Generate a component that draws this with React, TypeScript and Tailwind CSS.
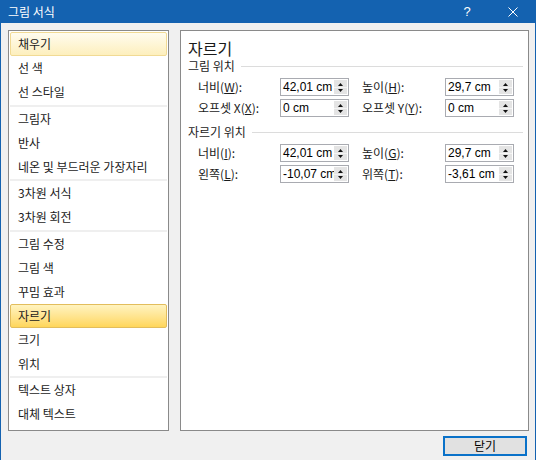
import type { ReactNode } from "react";

const groups = [
  ["채우기", "선 색", "선 스타일"],
  ["그림자", "반사", "네온 및 부드러운 가장자리"],
  ["3차원 서식", "3차원 회전"],
  ["그림 수정", "그림 색", "꾸밈 효과", "자르기", "크기", "위치"],
  ["텍스트 상자", "대체 텍스트"],
];

const hovered = "채우기";
const selected = "자르기";

const Key = ({ k }: { k: string }) => <span className="underline underline-offset-[1px]">{k}</span>;

const TitleBar = () => (
  <div className="h-[23px] bg-[#1462b0] flex items-center text-white">
    <span className="pl-[7px] flex-1 leading-none">그림 서식</span>
    <div className="w-[46px] h-full flex items-center justify-center text-[13px] font-['Liberation_Sans',sans-serif]">?</div>
    <div className="w-[45px] h-full flex items-center justify-center">
      <svg width="10" height="10" viewBox="0 0 10 10">
        <path d="M0.5 0.5 L9.5 9.5 M9.5 0.5 L0.5 9.5" stroke="#fff" strokeWidth="1" fill="none" />
      </svg>
    </div>
  </div>
);

const CategoryList = () => (
  <div className="w-[161px] h-[401px] border border-[#8a8a8a] bg-white pt-px px-px flex flex-col">
    {groups.map((items, gi) => (
      <div key={gi} className="flex flex-col">
        {gi > 0 && (
          <div className={`flex items-end ${gi % 2 === 1 ? "h-[3px]" : "h-[2px]"}`}>
            <div className="h-[2px] w-full bg-[#efefef]" />
          </div>
        )}
        {items.map((item) => {
          let look = "border-transparent";
          if (item === selected) look = "border-[#e2bd5c] bg-gradient-to-b from-[#fff3bf] to-[#ffd659]";
          if (item === hovered) look = "border-[#f1da94] bg-gradient-to-b from-[#fffcef] to-[#fdefbd]";
          return (
            <div key={item} className={`h-[24px] border rounded-[2px] pl-[7px] flex items-center leading-none ${look}`}>
              {item}
            </div>
          );
        })}
      </div>
    ))}
  </div>
);

const Spinner = () => (
  <div className="w-[13px] my-px mr-px flex flex-col bg-[#e4e4e4]">
    <div className="flex-1 flex items-end justify-center pb-[1px]">
      <svg width="5" height="3" viewBox="0 0 5 3">
        <path d="M2.5 0 L5 3 L0 3Z" fill="#111" />
      </svg>
    </div>
    <div className="h-px bg-[#f4f4f4]" />
    <div className="flex-1 flex items-start justify-center pt-[1px]">
      <svg width="5" height="3" viewBox="0 0 5 3">
        <path d="M0 0 L5 0 L2.5 3Z" fill="#111" />
      </svg>
    </div>
  </div>
);

const NumberBox = ({ value }: { value: string }) => (
  <div className="w-[69px] h-[18px] border border-[#a9abb1] bg-white flex">
    <div className="flex-1 overflow-hidden whitespace-nowrap pl-[2px] font-['Liberation_Sans',sans-serif] text-[12px] leading-[16px] text-black">
      {value}
    </div>
    <Spinner />
  </div>
);

const Heading = ({ children, className = "" }: { children: ReactNode; className?: string }) => (
  <div className={`h-[16px] flex items-center ${className}`}>
    <span className="leading-none">{children}</span>
    <div className="flex-1 h-px bg-[#dcdcdc] ml-[6px]" />
  </div>
);

const Row = ({
  left,
  leftValue,
  right,
  rightValue,
  className = "",
}: {
  left: ReactNode;
  leftValue: string;
  right: ReactNode;
  rightValue: string;
  className?: string;
}) => (
  <div className={`flex items-center pl-[10px] ${className}`}>
    <div className="w-[82px] leading-none">{left}</div>
    <NumberBox value={leftValue} />
    <div className="w-[83px] ml-[13px] leading-none">{right}</div>
    <NumberBox value={rightValue} />
  </div>
);

const CropPane = () => (
  <div className="w-[349px] h-[401px] border border-[#8a8a8a] bg-white pt-[6px] pl-[7px] pr-[5px] flex flex-col">
    <div className="h-[21px] flex items-center text-[16px] leading-none">자르기</div>
    <Heading>그림 위치</Heading>
    <Row
      className="mt-[4px]"
      left={<>너비(<Key k="W" />):</>}
      leftValue="42,01 cm"
      right={<>높이(<Key k="H" />):</>}
      rightValue="29,7 cm"
    />
    <Row
      className="mt-[3px]"
      left={<>오프셋 X(<Key k="X" />):</>}
      leftValue="0 cm"
      right={<>오프셋 Y(<Key k="Y" />):</>}
      rightValue="0 cm"
    />
    <Heading className="mt-[7px]">자르기 위치</Heading>
    <Row
      className="mt-[4px]"
      left={<>너비(<Key k="I" />):</>}
      leftValue="42,01 cm"
      right={<>높이(<Key k="G" />):</>}
      rightValue="29,7 cm"
    />
    <Row
      className="mt-[3px]"
      left={<>왼쪽(<Key k="L" />):</>}
      leftValue="-10,07 cm"
      right={<>위쪽(<Key k="T" />):</>}
      rightValue="-3,61 cm"
    />
  </div>
);

export default function App() {
  return (
    <div className="w-[536px] h-[460px] bg-[#f0f0f0] border-x border-[#1462b0] flex flex-col font-['Noto_Sans_CJK_KR','Malgun_Gothic',sans-serif] text-[12px] text-[#1a1a1a]">
      <TitleBar />
      <div className="flex gap-[11px] pl-[7px] pr-[6px] pt-[7px]">
        <CategoryList />
        <CropPane />
      </div>
      <div className="flex justify-end pt-[5px] pr-[8px]">
        <button
          type="button"
          className="w-[84px] h-[20px] border-2 border-[#0a72c9] bg-[#e1e1e1] flex items-center justify-center leading-none text-black"
        >
          닫기
        </button>
      </div>
    </div>
  );
}
